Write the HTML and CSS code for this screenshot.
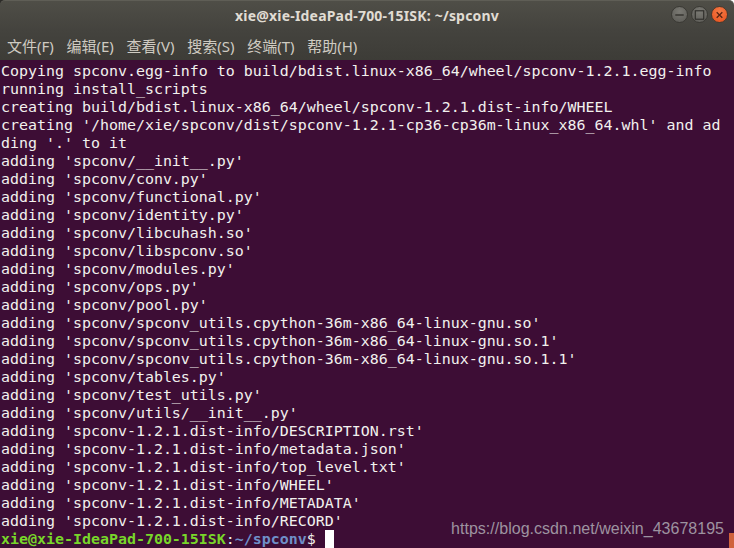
FILE: index.html
```html
<!DOCTYPE html>
<html lang="zh">
<head>
<meta charset="utf-8">
<title>Terminal</title>
<link rel="stylesheet" href="styles.css">
</head>
<body>
<div class="window">
  <header class="titlebar">
    <h1 class="title">xie@xie-IdeaPad-700-15ISK: ~/spconv</h1>
    <div class="controls">
      <span class="btn"><svg width="16" height="16" viewBox="0 0 16 16"><path d="M3.5 8h9" stroke="#2e2d29" stroke-width="1.4"/></svg></span>
      <span class="btn"><svg width="16" height="16" viewBox="0 0 16 16"><rect x="3.5" y="3.5" width="9" height="9" fill="none" stroke="#2e2d29" stroke-width="1.2"/></svg></span>
      <span class="btn close"><svg width="16" height="16" viewBox="0 0 16 16"><path d="M5 5l6 6M11 5l-6 6" stroke="#5a2412" stroke-width="1.4"/></svg></span>
    </div>
  </header>
  <nav class="menubar">
    <span>文件(F)</span><span>编辑(E)</span><span>查看(V)</span><span>搜索(S)</span><span>终端(T)</span><span>帮助(H)</span>
  </nav>
  <main class="terminal">
<pre class="output">Copying spconv.egg-info to build/bdist.linux-x86_64/wheel/spconv-1.2.1.egg-info
running install_scripts
creating build/bdist.linux-x86_64/wheel/spconv-1.2.1.dist-info/WHEEL
creating '/home/xie/spconv/dist/spconv-1.2.1-cp36-cp36m-linux_x86_64.whl' and ad
ding '.' to it
adding 'spconv/__init__.py'
adding 'spconv/conv.py'
adding 'spconv/functional.py'
adding 'spconv/identity.py'
adding 'spconv/libcuhash.so'
adding 'spconv/libspconv.so'
adding 'spconv/modules.py'
adding 'spconv/ops.py'
adding 'spconv/pool.py'
adding 'spconv/spconv_utils.cpython-36m-x86_64-linux-gnu.so'
adding 'spconv/spconv_utils.cpython-36m-x86_64-linux-gnu.so.1'
adding 'spconv/spconv_utils.cpython-36m-x86_64-linux-gnu.so.1.1'
adding 'spconv/tables.py'
adding 'spconv/test_utils.py'
adding 'spconv/utils/__init__.py'
adding 'spconv-1.2.1.dist-info/DESCRIPTION.rst'
adding 'spconv-1.2.1.dist-info/metadata.json'
adding 'spconv-1.2.1.dist-info/top_level.txt'
adding 'spconv-1.2.1.dist-info/WHEEL'
adding 'spconv-1.2.1.dist-info/METADATA'
adding 'spconv-1.2.1.dist-info/RECORD'
<span class="host">xie@xie-IdeaPad-700-15ISK</span>:<span class="path">~/spconv</span>$ <span class="cursor"> </span></pre>
    <div class="watermark">https://blog.csdn.net/weixin_43678195</div>
    <div class="corner-mark"></div>
  </main>
</div>
</body>
</html>
```
FILE: styles.css
```css
* { box-sizing: border-box; }
html, body { margin: 0; padding: 0; }
body {
  width: 734px; height: 548px; overflow: hidden;
  background: linear-gradient(90deg, #2c2b28 50%, #ffffff 50%);
}
.window { display: flex; flex-direction: column; width: 734px; height: 548px; }
.titlebar {
  display: flex; align-items: center; justify-content: center; position: relative;
  height: 30px; flex: none; padding-bottom: 1px;
  background: linear-gradient(#4f4e47, #44433e);
  border-top: 1px solid #5f5e56;
  border-radius: 5px 5px 0 0;
}
.title { margin: 0; font: 700 14px "Noto Sans", "Liberation Sans", sans-serif; letter-spacing: 0.2px; color: #e0dcd3; }
.controls { position: absolute; right: 6px; top: 5px; display: flex; gap: 3px; }
.btn {
  width: 17px; height: 17px; border-radius: 50%; display: flex; align-items: center; justify-content: center;
  background: radial-gradient(circle at 50% 30%, #7a7973, #5a5954);
  border: 1px solid #3a3934;
}
.btn.close { background: radial-gradient(circle at 50% 30%, #f47a46, #e9501c); border-color: #4a3a2e; }
.menubar {
  display: flex; gap: 12.7px; align-items: center; height: 30px; flex: none; padding: 0 0 0 7px;
  background: linear-gradient(#44433e, #3d3c37);
  font: 15px "Noto Sans", "Noto Sans CJK SC", sans-serif; color: #cfcbc2;
}
.terminal { position: relative; flex: 1; background: #3d0d35; padding: 2px 0 0 1px; overflow: hidden; }
.output { margin: 0; font: 14.95px/18px "DejaVu Sans Mono", monospace; color: #f2f1ee; }
.host { color: #78d62a; font-weight: 700; }
.path { color: #6f8fc8; font-weight: 700; }
.cursor { background: #fff; }
.watermark {
  position: absolute; right: 10px; bottom: 10px;
  font: 16px "Liberation Sans", sans-serif; letter-spacing: 0.02px; color: #9d93a0;
}
.corner-mark { position: absolute; right: 0; bottom: 0; width: 5px; height: 15px; background: #d0623c; }
```
